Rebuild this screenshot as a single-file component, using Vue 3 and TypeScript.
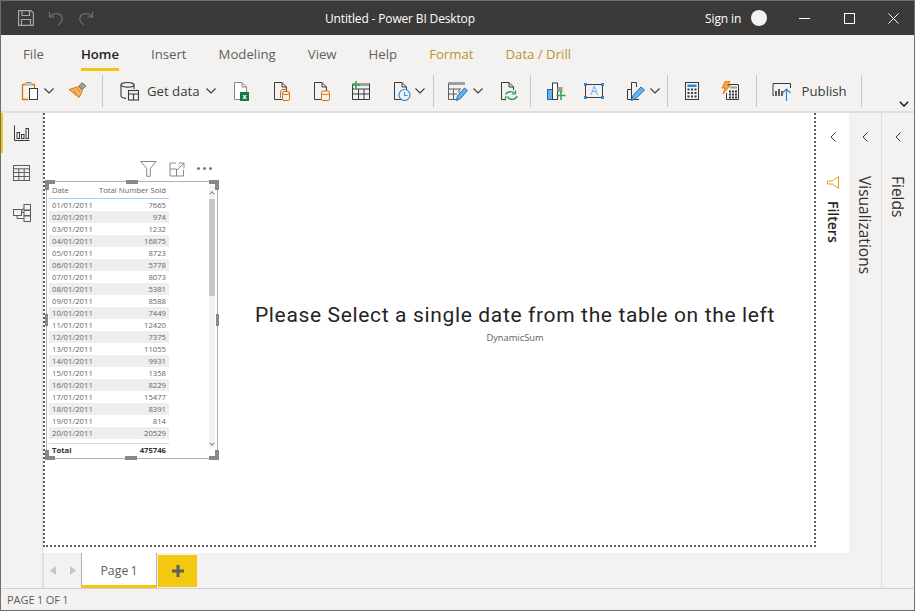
<script setup lang="ts">
const tabs = ['Insert', 'Modeling', 'View', 'Help']
const rows: [string, number][] = [
  ['01/01/2011', 7665], ['02/01/2011', 974], ['03/01/2011', 1232], ['04/01/2011', 16875],
  ['05/01/2011', 8723], ['06/01/2011', 5778], ['07/01/2011', 8073], ['08/01/2011', 5381],
  ['09/01/2011', 8588], ['10/01/2011', 7449], ['11/01/2011', 12420], ['12/01/2011', 7375],
  ['13/01/2011', 11055], ['14/01/2011', 9931], ['15/01/2011', 1358], ['16/01/2011', 8229],
  ['17/01/2011', 15477], ['18/01/2011', 8391], ['19/01/2011', 814], ['20/01/2011', 20529],
]
const docPath = 'M3.5 1.5H11L15.5 6V18.5H3.5Z M11 1.5V6H15.5'
</script>

<template>
  <div class="window">
    <header class="titlebar">
      <div class="quick">
        <svg class="q-save" width="18" height="18" viewBox="0 0 18 18" fill="none" stroke="#a8a6a4" stroke-width="1.2">
          <path d="M1.6 1.6H14L16.4 4V16.4H1.6Z" />
          <path d="M5 1.8V6.5H12.5V1.8M4.5 16.2V10.5H13.5V16.2" />
        </svg>
        <svg class="q-undo" width="16" height="16" viewBox="0 0 16 16" fill="none" stroke="#6f6e6c" stroke-width="1.2">
          <path d="M1.5 2V7H6.5M1.7 6.8C5 3 10 2.5 13 5.5C15.5 8.5 14 13 10 15" />
        </svg>
        <svg class="q-redo" width="16" height="16" viewBox="0 0 16 16" fill="none" stroke="#6f6e6c" stroke-width="1.2">
          <path d="M14.5 2V7H9.5M14.3 6.8C11 3 6 2.5 3 5.5C.5 8.5 2 13 6 15" />
        </svg>
      </div>
      <div class="title">Untitled - Power BI Desktop</div>
      <div class="sign-in">Sign in</div>
      <span class="avatar"></span>
      <svg class="win-min" width="11" height="11" viewBox="0 0 11 11" stroke="#fff"><path d="M0 5.5H11" /></svg>
      <svg class="win-max" width="11" height="11" viewBox="0 0 11 11" fill="none" stroke="#fff"><rect x=".5" y=".5" width="10" height="10" /></svg>
      <svg class="win-close" width="11" height="11" viewBox="0 0 11 11" stroke="#fff"><path d="M.5.5L10.5 10.5M10.5.5L.5 10.5" /></svg>
    </header>

    <nav class="tabbar">
      <span class="tab file">File</span>
      <span class="tab active">Home</span>
      <span v-for="t in tabs" :key="t" class="tab">{{ t }}</span>
      <span class="tab ctx">Format</span>
      <span class="tab ctx">Data / Drill</span>
    </nav>

    <div class="toolbar">
      <div class="group g1">
        <div class="split">
          <svg class="ico" viewBox="0 0 20 20" fill="none">
            <path d="M2.5 3.5H14.5V7M8 18.5H2.5V3.5" stroke="#d9730d" stroke-width="1.3" />
            <path d="M6 3.5V1.5H11V3.5" stroke="#8a8886" />
            <rect x="5.5" y="2.5" width="6" height="2.5" fill="#c8c6c4" />
            <rect x="9.5" y="7.5" width="8" height="11" fill="#fff" stroke="#3b3a39" />
          </svg>
          <svg class="chev" viewBox="0 0 10 6" fill="none" stroke="#3b3a39" stroke-width="1.1"><path d="M.5.5L5 5L9.5.5" /></svg>
        </div>
        <svg class="ico" viewBox="0 0 20 20" fill="none">
          <path d="M14 1.5L18 5L14.5 8.5L11 5Z" fill="#a19f9d" stroke="#605e5c" stroke-width=".7" />
          <path d="M10.5 5.5L14.5 9.5L11 16.5L1 8.5Z" fill="#f4b66f" stroke="#d9730d" />
          <path d="M6 9.5L8.5 14M9 7.5L12 11" stroke="#d9730d" />
        </svg>
      </div>

      <div class="group g2">
        <div class="split getdata">
          <svg class="ico" viewBox="0 0 20 20" fill="none" stroke="#3b3a39" stroke-width="1.1">
            <ellipse cx="8.5" cy="3.8" rx="6.5" ry="2.3" />
            <path d="M2 3.8V15C2 16.5 4.5 17.2 7 17.4M15 3.8V8" />
            <rect x="9.5" y="9.5" width="10" height="9.5" fill="#f3f2f1" />
            <path d="M9.5 13H19.5M14.5 13V19" />
          </svg>
          <span class="label getdata-label">Get data</span>
          <svg class="chev" viewBox="0 0 10 6" fill="none" stroke="#3b3a39" stroke-width="1.1"><path d="M.5.5L5 5L9.5.5" /></svg>
        </div>
        <svg class="ico" viewBox="0 0 20 20" fill="none">
          <path :d="docPath" stroke="#8a8886" fill="#fff" />
          <rect x="9" y="11" width="9" height="9" fill="#107c41" />
          <text x="13.5" y="18" class="xl">x</text>
        </svg>
        <svg class="ico" viewBox="0 0 20 20" fill="none">
          <path :d="docPath" stroke="#3b3a39" />
          <path d="M9.5 17V10.5L11 8.5H15.5" stroke="#d9730d" fill="#f3f2f1" />
          <rect x="11.5" y="10.5" width="7" height="9" rx="1.5" fill="#f3f2f1" stroke="#d9730d" />
          <path d="M11.5 12.5C13 14 17 14 18.5 12.5" stroke="#d9730d" />
        </svg>
        <svg class="ico" viewBox="0 0 20 20" fill="none">
          <path :d="docPath" stroke="#3b3a39" />
          <rect x="10.5" y="10" width="8" height="9.5" rx="1.5" fill="#f3f2f1" stroke="#d9730d" />
          <path d="M10.5 12.5C12 14 17 14 18.5 12.5" stroke="#d9730d" />
        </svg>
        <svg class="ico" viewBox="0 0 20 20" fill="none">
          <rect x="1" y="2" width="18" height="3" fill="#a19f9d" />
          <path d="M1.5 3V18.5H18.5V3M1.5 8H18.5M1.5 13H18.5M7.5 8V18.5M13 8V18.5" stroke="#3b3a39" />
          <path d="M5 0V8M1 4H9" stroke="#33a852" stroke-width="1.6" />
        </svg>
        <div class="split">
          <svg class="ico" viewBox="0 0 20 20" fill="none">
            <path :d="docPath" stroke="#3b3a39" />
            <circle cx="13.5" cy="14" r="5.5" fill="#f3f2f1" stroke="#2b88d8" stroke-width="1.2" />
            <path d="M13.5 11V14.5H16.5" stroke="#2b88d8" />
          </svg>
          <svg class="chev" viewBox="0 0 10 6" fill="none" stroke="#3b3a39" stroke-width="1.1"><path d="M.5.5L5 5L9.5.5" /></svg>
        </div>
      </div>

      <div class="group g3">
        <div class="split wide">
          <svg class="ico" viewBox="0 0 20 20" fill="none">
            <rect x="0" y="1" width="17" height="3" fill="#a19f9d" />
            <path d="M.5 3V18.5H9M.5 8H13M.5 13H9M5.5 8V18.5M11 8V12" stroke="#605e5c" />
            <path d="M8.5 19.5L9.5 15L16.5 7L19.5 9.5L12.5 17.5Z" fill="#71afe5" stroke="#0078d4" />
          </svg>
          <svg class="chev" viewBox="0 0 10 6" fill="none" stroke="#3b3a39" stroke-width="1.1"><path d="M.5.5L5 5L9.5.5" /></svg>
        </div>
        <svg class="ico" viewBox="0 0 20 20" fill="none">
          <path d="M8 18.5H3.5V1.5H11L15.5 6V9M11 1.5V6H15.5" stroke="#3b3a39" />
          <path d="M8 13.5C8.5 10.5 14 9.5 16.5 12.5M19 15C18 18.5 13 19.5 10 16.5" stroke="#2e9e4f" stroke-width="1.4" />
          <path d="M17.5 9.5V13H14M7.5 19.5V16H11" stroke="#2e9e4f" stroke-width="1.2" />
        </svg>
      </div>

      <div class="group g4">
        <svg class="ico" viewBox="0 0 20 20" fill="none">
          <rect x="1.5" y="8.5" width="5" height="10" fill="#71afe5" stroke="#106ebe" />
          <rect x="6.5" y="2" width="5" height="16.5" fill="#fff" stroke="#3b3a39" />
          <rect x="11.5" y="6" width="5" height="5" fill="#a19f9d" />
          <path d="M15 10V19M10.5 14.5H19.5" stroke="#33a852" stroke-width="1.6" />
        </svg>
        <svg class="ico" viewBox="0 0 20 20" fill="none">
          <rect x="1.5" y="3.5" width="17" height="13" stroke="#3b3a39" />
          <rect x="0" y="2" width="3" height="3" fill="#2b88d8" />
          <rect x="17" y="2" width="3" height="3" fill="#2b88d8" />
          <rect x="0" y="15" width="3" height="3" fill="#2b88d8" />
          <rect x="17" y="15" width="3" height="3" fill="#2b88d8" />
          <text x="10" y="14" class="txt-a">A</text>
        </svg>
        <div class="split pen">
          <svg class="ico" viewBox="0 0 20 20" fill="none">
            <path d="M5.5 18.5H1.5V8.5H5.5V1.5H10.5V6M5.5 8.5V18.5M13 18.5H7" stroke="#3b3a39" />
            <path d="M5.5 19.5L7 14.5L15 6L18.5 9L10 17.5Z" fill="#71afe5" stroke="#0078d4" />
          </svg>
          <svg class="chev" viewBox="0 0 10 6" fill="none" stroke="#3b3a39" stroke-width="1.1"><path d="M.5.5L5 5L9.5.5" /></svg>
        </div>
      </div>

      <div class="group g5">
        <svg class="ico" viewBox="0 0 20 20" fill="none">
          <rect x="3.5" y="1.5" width="13" height="17" stroke="#3b3a39" />
          <rect x="5.5" y="3.5" width="9" height="2.5" fill="#2b88d8" />
          <path d="M5.5 8.5h2M9 8.5h2M12.5 8.5h2M5.5 12h2M9 12h2M12.5 12h2M5.5 15.5h2M9 15.5h2M12.5 15.5h2" stroke="#3b3a39" stroke-width="2" />
        </svg>
        <svg class="ico" viewBox="0 0 20 20" fill="none">
          <path d="M7 3.5H18.5V18.5H6.5V12" stroke="#3b3a39" />
          <rect x="10" y="5.5" width="7" height="2" fill="#a19f9d" />
          <path d="M9 10.5h2M12 10.5h2M15 10.5h2M9 13.5h2M12 13.5h2M15 13.5h2M9 16.5h2M12 16.5h2M15 16.5h2" stroke="#3b3a39" stroke-width="2" />
          <path d="M5 .5H10L7.5 4.5H10L3 13L5 7H2Z" fill="#f7a23b" stroke="#d9730d" stroke-width=".8" />
        </svg>
      </div>

      <div class="group g6">
        <svg class="ico" viewBox="0 0 20 20" fill="none">
          <path d="M2 14.5H1V2.5H18.5V7" stroke="#3b3a39" />
          <path d="M4 10V15M7 8V15M10 10V15" stroke="#3b3a39" stroke-width="1.6" />
          <path d="M14.5 20V8M10.5 12L14.5 8L18.5 12" stroke="#2b88d8" stroke-width="1.2" />
        </svg>
        <span class="label">Publish</span>
      </div>

      <svg class="collapse" viewBox="0 0 10 6" fill="none" stroke="#252423" stroke-width="1.6"><path d="M.8.8L5 5L9.2.8" /></svg>
    </div>

    <div class="body">
      <aside class="rail">
        <div class="rail-item on">
          <svg width="16" height="16" viewBox="0 0 16 16" fill="none" stroke="#3b3a39">
            <path d="M.5 .5V15.5H15.5" stroke-width="1" />
            <rect x="3" y="7.5" width="2.5" height="6" />
            <rect x="7.5" y="9.5" width="2.5" height="4" />
            <rect x="12" y="3.5" width="2.5" height="10" />
          </svg>
        </div>
        <div class="rail-item">
          <svg width="17" height="16" viewBox="0 0 17 16" fill="none" stroke="#605e5c">
            <rect x=".5" y=".5" width="16" height="15" />
            <path d="M.5 3.8H16.5M.5 7.5H16.5M.5 11.5H16.5M5.8 3.8V15.5M11.2 3.8V15.5" />
          </svg>
        </div>
        <div class="rail-item">
          <svg width="18" height="18" viewBox="0 0 18 18" fill="none" stroke="#605e5c">
            <rect x=".5" y="5.5" width="8" height="6" />
            <rect x="11" y=".5" width="6.5" height="5.5" />
            <rect x="11" y="6.5" width="6.5" height="5" />
            <rect x="11" y="12" width="6.5" height="5.5" />
            <path d="M4 11.5V14.5H11M8.5 8.5H11M8.5 7L11 3.5" />
          </svg>
        </div>
      </aside>

      <div class="center">
        <div class="center-top">
          <main class="page">
            <div class="visual-head">
              <svg width="17" height="16" viewBox="0 0 17 16" fill="none" stroke="#8a8886">
                <path d="M.8.5H16.2L10.3 7.5V15.3H6.7V7.5Z" />
              </svg>
              <svg width="16" height="15" viewBox="0 0 16 15" fill="none" stroke="#8a8886">
                <path d="M7 1H1V14H14.5V8M1 7H7.5V14M9.5 1H15V6.5M15 1L8 8" />
              </svg>
              <span class="more"><i></i><i></i><i></i></span>
            </div>

            <section class="visual">
              <div class="tbl-head"><span>Date</span><span>Total Number Sold</span></div>
              <div class="tbl-body">
                <div v-for="r in rows" :key="r[0]" class="tbl-row">
                  <span>{{ r[0] }}</span><span>{{ r[1] }}</span>
                </div>
              </div>
              <div class="tbl-total"><span>Total</span><span>475746</span></div>

              <div class="scroll">
                <span class="sc-up"></span>
                <span class="sc-thumb"></span>
                <span class="sc-down"></span>
              </div>

              <span class="hd corner tl"></span>
              <span class="hd corner tr"></span>
              <span class="hd corner bl"></span>
              <span class="hd corner br"></span>
              <span class="hd mid-t"></span>
              <span class="hd mid-b"></span>
              <span class="hd mid-l"></span>
              <span class="hd mid-r"></span>
            </section>

            <section class="card">
              <div class="card-value">Please Select a single date from the table on the left</div>
              <div class="card-label">DynamicSum</div>
            </section>
          </main>
          <aside class="pane filters">
            <svg class="pane-chev" viewBox="0 0 6 10" fill="none" stroke="#3b3a39"><path d="M5.5.5L1 5L5.5 9.5" /></svg>
            <svg class="funnel" width="12" height="13" viewBox="0 0 12 13" fill="none" stroke="#e3a21a">
              <path d="M11.5.5V12.5L5.5 8H.5V5H5.5Z" />
            </svg>
            <span class="pane-label strong">Filters</span>
          </aside>
        </div>

        <div class="pagebar">
          <div class="arrows">
            <svg width="6" height="9" viewBox="0 0 6 9" fill="#c8c6c4"><path d="M6 0V9L0 4.5Z" /></svg>
            <svg width="6" height="9" viewBox="0 0 6 9" fill="#c8c6c4"><path d="M0 0V9L6 4.5Z" /></svg>
          </div>
          <div class="page-tab">Page 1</div>
          <div class="add">
            <svg width="12" height="12" viewBox="0 0 12 12" fill="#605e5c"><path d="M4.5 0H7.5V4.5H12V7.5H7.5V12H4.5V7.5H0V4.5H4.5Z" /></svg>
          </div>
        </div>
      </div>

      <aside class="pane">
        <svg class="pane-chev" viewBox="0 0 6 10" fill="none" stroke="#3b3a39"><path d="M5.5.5L1 5L5.5 9.5" /></svg>
        <span class="pane-label">Visualizations</span>
      </aside>
      <aside class="pane">
        <svg class="pane-chev" viewBox="0 0 6 10" fill="none" stroke="#3b3a39"><path d="M5.5.5L1 5L5.5 9.5" /></svg>
        <span class="pane-label">Fields</span>
      </aside>
    </div>

    <footer class="status">PAGE 1 OF 1</footer>
  </div>
</template>

<style>
html, body { margin: 0; background: #f3f2f1; }
</style>

<style scoped>
.window {
  width: 915px;
  height: 611px;
  box-sizing: border-box;
  border: 1px solid #6e6e6e;
  display: flex;
  flex-direction: column;
  overflow: hidden;
  background: #f3f2f1;
  font-family: "Open Sans", "Noto Sans", sans-serif;
  color: #3b3a39;
}

/* title bar */
.titlebar {
  height: 34px;
  flex: none;
  display: flex;
  align-items: center;
  background: #3b3a39;
  color: #fff;
  font-size: 12px;
}
.quick { display: flex; align-items: center; padding-left: 16px; width: 324px; flex: none; box-sizing: border-box; }
.q-undo { margin-left: 13px; }
.q-redo { margin-left: 14px; }
.title { width: 380px; flex: none; letter-spacing: -0.15px; }
.sign-in { width: 46px; flex: none; letter-spacing: -0.1px; }
.avatar { width: 16px; height: 16px; border-radius: 50%; background: #f3f2f1; flex: none; }
.win-min { margin-left: 32px; }
.win-max { margin-left: 34px; }
.win-close { margin-left: 33px; }

/* ribbon tabs */
.tabbar {
  height: 37px;
  flex: none;
  display: flex;
  align-items: flex-start;
  padding-left: 22px;
  font-size: 13.2px;
  color: #605e5c;
}
.tab {
  height: 33px;
  line-height: 38px;
  margin-right: 32px;
  white-space: nowrap;
}
.tab.file { margin-right: 37px; }
.tab.active { color: #252423; font-weight: 600; border-bottom: 3px solid #f2c811; }
.tab.ctx { color: #b8952a; }

/* ribbon tools */
.toolbar {
  height: 38px;
  padding-bottom: 1px;
  flex: none;
  display: flex;
  align-items: center;
  border-bottom: 2px solid #e1dfdd;
  box-sizing: content-box;
}
.group {
  height: 32px;
  display: flex;
  align-items: center;
  flex: none;
  border-right: 1px solid #c8c6c4;
}
.g1 { padding: 0 14px 0 19px; gap: 14px; }
.g2 { padding: 0 8px 0 16px; gap: 20px; }
.g3 { padding: 0 12px 0 14px; gap: 15px; }
.g4 { padding: 0 7px 0 15px; gap: 18px; }
.g5 { padding: 0 16px 0 14px; gap: 18px; }
.g6 { padding: 0 14px 0 15px; gap: 10px; }
.split { display: flex; align-items: center; gap: 4px; }
.split.wide { gap: 5px; }
.split.pen { margin-left: 4px; }
.getdata { margin-right: -5px; }
.getdata-label { margin: 0 2px 0 4px; }
.ico { width: 20px; height: 20px; flex: none; display: block; }
.chev { width: 10px; height: 6px; flex: none; }
.label { font-size: 13.2px; color: #3b3a39; white-space: nowrap; }
.collapse { width: 10px; height: 6px; margin: 26px 0 0 37px; flex: none; }
.xl { font: 700 7px "Open Sans", sans-serif; fill: #fff; text-anchor: middle; }
.txt-a { font: 400 12px "Open Sans", sans-serif; fill: #71afe5; text-anchor: middle; }

/* main area */
.body { flex: 1; min-height: 0; display: flex; }
.rail {
  width: 41px;
  flex: none;
  display: flex;
  flex-direction: column;
  border-right: 1px solid #e1dfdd;
  box-sizing: content-box;
}
.rail-item { height: 40px; display: flex; align-items: center; justify-content: center; box-sizing: border-box; }
.rail-item.on { border-left: 2px solid #f2c811; padding-right: 2px; }

.center { flex: 1; min-width: 0; display: flex; flex-direction: column; background: #fff; }
.center-top { flex: 1; min-height: 0; display: flex; }
.page {
  flex: 1;
  position: relative;
  margin: 0 1px 6px 0;
  border-left: 2px dotted #605e5c;
  border-right: 2px dotted #605e5c;
  border-bottom: 2px dotted #605e5c;
  background: #fff;
}
.visual-head {
  position: absolute;
  left: 95px;
  top: 48px;
  display: flex;
  align-items: center;
  gap: 12px;
}
.more { display: flex; gap: 3px; margin: -1px 0 0 0; }
.more i { width: 3px; height: 3px; background: #797775; border-radius: 50%; }

.visual {
  position: absolute;
  left: 1px;
  top: 68px;
  width: 172px;
  height: 278px;
  box-sizing: border-box;
  border: 1px solid #b3b0ad;
  padding: 0 0 0 2px;
  display: flex;
  flex-direction: column;
  font-size: 7.7px;
  color: #666;
}
.tbl-head {
  width: 120px;
  height: 18px;
  margin-top: -1px;
  box-sizing: border-box;
  padding: 0 3px;
  display: flex;
  justify-content: space-between;
  align-items: center;
  border-bottom: 1px solid #a9d0f0;
  flex: none;
}
.tbl-body { width: 120px; flex: none; height: 245px; overflow: hidden; border-bottom: 1px solid #c7e0f4; box-sizing: border-box; }
.tbl-row {
  height: 12px;
  line-height: 12px;
  padding: 0 3px;
  display: flex;
  justify-content: space-between;
}
.tbl-row:nth-child(even) { background: #eeeeee; }
.tbl-total {
  width: 120px;
  box-sizing: border-box;
  padding: 0 3px;
  display: flex;
  justify-content: space-between;
  font-weight: 700;
  color: #333;
  line-height: 13px;
}

.scroll {
  position: absolute;
  left: 162px;
  top: 4px;
  width: 6px;
  height: 262px;
  background: #f3f2f1;
}
.sc-up, .sc-down { position: absolute; left: 1px; width: 4px; height: 4px; border: 1px solid #8a8886; border-width: 1px 0 0 1px; box-sizing: border-box; transform: rotate(45deg); }
.sc-up { top: 6px; }
.sc-down { top: 255px; transform: rotate(225deg); }
.sc-thumb { position: absolute; left: 0; top: 13px; width: 6px; height: 97px; background: #c8c6c4; }

.hd { position: absolute; background: #8a8886; }
.corner { width: 10px; height: 4px; }
.corner::after { content: ""; position: absolute; width: 4px; height: 10px; background: #8a8886; }
.tl { left: -2px; top: -2px; }
.tl::after { left: 0; top: 0; }
.tr { right: -2px; top: -2px; }
.tr::after { right: 0; top: 0; }
.bl { left: -2px; bottom: -2px; }
.bl::after { left: 0; bottom: 0; }
.br { right: -2px; bottom: -2px; }
.br::after { right: 0; bottom: 0; }
.mid-t { left: 79px; top: -2px; width: 12px; height: 4px; }
.mid-b { left: 78px; bottom: -2px; width: 12px; height: 4px; }
.mid-l { left: -2px; top: 132px; width: 3px; height: 12px; }
.mid-r { right: -2px; top: 132px; width: 3px; height: 12px; }

.card {
  position: absolute;
  left: 190px;
  top: 186px;
  width: 560px;
  text-align: center;
}
.card-value {
  font-family: Roboto, "Liberation Sans", sans-serif;
  font-size: 21px;
  line-height: 32px;
  letter-spacing: 0.65px;
  color: #252423;
  white-space: nowrap;
}
.card-label { font-size: 9.3px; line-height: 13px; color: #605e5c; }

/* collapsed side panes */
.pane {
  width: 32px;
  flex: none;
  display: flex;
  flex-direction: column;
  align-items: center;
  background: #f3f2f1;
  border-right: 1px solid #e1dfdd;
  box-sizing: content-box;
}
.pane:last-child { border-right: 0; }
.pane.filters { background: #fff; }
.pane-chev { width: 6px; height: 10px; margin-top: 19px; flex: none; }
.funnel { margin-top: 34px; flex: none; }
.pane-label {
  writing-mode: vertical-rl;
  font-size: 15.5px;
  line-height: 20px;
  margin-top: 34px;
  color: #323130;
  white-space: nowrap;
}
.pane-label.strong { margin-top: 12px; font-weight: 600; color: #252423; font-size: 14px; }

/* page tabs */
.pagebar {
  height: 35px;
  flex: none;
  display: flex;
  background: #f3f2f1;
}
.arrows { width: 38px; display: flex; align-items: center; justify-content: center; gap: 14px; flex: none; box-sizing: border-box; border-left: 1px solid #e1dfdd; }
.page-tab {
  width: 76px;
  box-sizing: border-box;
  background: #fff;
  border-left: 1px solid #b3b0ad;
  border-right: 1px solid #b3b0ad;
  border-bottom: 3px solid #f2c811;
  font-size: 12.3px;
  word-spacing: -1px;
  line-height: 36px;
  text-align: center;
  color: #605e5c;
  flex: none;
}
.add {
  width: 39px;
  height: 32px;
  margin: 2px 0 0 1px;
  background: #f2c811;
  display: flex;
  align-items: center;
  justify-content: center;
  flex: none;
}

.status {
  height: 21px;
  flex: none;
  border-top: 1px solid #d2d0ce;
  padding-left: 6px;
  font-size: 11px;
  word-spacing: -0.5px;
  line-height: 22px;
  color: #605e5c;
}
</style>
